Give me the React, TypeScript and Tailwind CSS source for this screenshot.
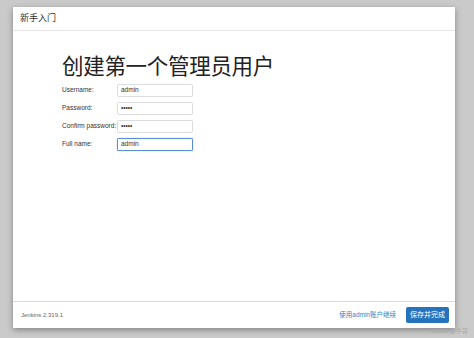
const fields = [
  { label: "Username:", value: "admin", focus: false },
  { label: "Password:", value: "•••••", focus: false },
  { label: "Confirm password:", value: "•••••", focus: false },
  { label: "Full name:", value: "admin", focus: true },
];

export default function App() {
  return (
    <div
      className="w-[474px] h-[338px] bg-[#cacaca] pt-[7px] pl-[13px] relative overflow-hidden"
      style={{ fontFamily: '"Liberation Sans", "Noto Sans CJK SC", sans-serif' }}
    >
      <div className="w-[442px] h-[321px] bg-white flex flex-col shadow-[0_2px_6px_rgba(0,0,0,0.35)]">
        {/* header */}
        <div className="h-[24px] border-b border-[#e6e6e6] flex items-center pl-[7px] text-[9px] text-[#333]">
          新手入门
        </div>

        {/* body */}
        <div className="flex-1 pl-[49px] pt-[26px]">
          <h1 className="text-[21.5px] leading-none text-[#222] mb-[5px] tracking-[-0.3px]">
            创建第一个管理员用户
          </h1>
          <div className="flex flex-col gap-[5px]">
            {fields.map((f) => (
              <div key={f.label} className="flex items-center h-[13px]">
                <span className="w-[55px] text-[6.5px] text-[#333] whitespace-nowrap">{f.label}</span>
                <div
                  className={`w-[76px] h-[13px] flex items-center px-[3px] text-[6.5px] text-[#333] bg-white rounded-[1.5px] ${
                    f.focus
                      ? "border border-[#5b8fd4] shadow-[0_0_1px_#5b8fd4]"
                      : "border border-[#dcdcdc]"
                  }`}
                >
                  {f.value}
                </div>
              </div>
            ))}
          </div>
        </div>

        {/* footer */}
        <div className="h-[27px] border-t border-[#d9d9d9] flex items-center pl-[8px] pr-[6px]">
          <span className="text-[6px] text-[#666]">Jenkins 2.319.1</span>
          <span className="ml-auto text-[6.5px] text-[#3d7fc4] mr-[10px]">使用admin账户继续</span>
          <button className="w-[43px] h-[16px] bg-[#2673bd] text-white text-[7px] rounded-[2px]">
            保存并完成
          </button>
        </div>
      </div>
      <span className="absolute right-[6px] bottom-[2px] text-[6px] text-[#a8a8a8]">CSDN @牛哥</span>
    </div>
  );
}
